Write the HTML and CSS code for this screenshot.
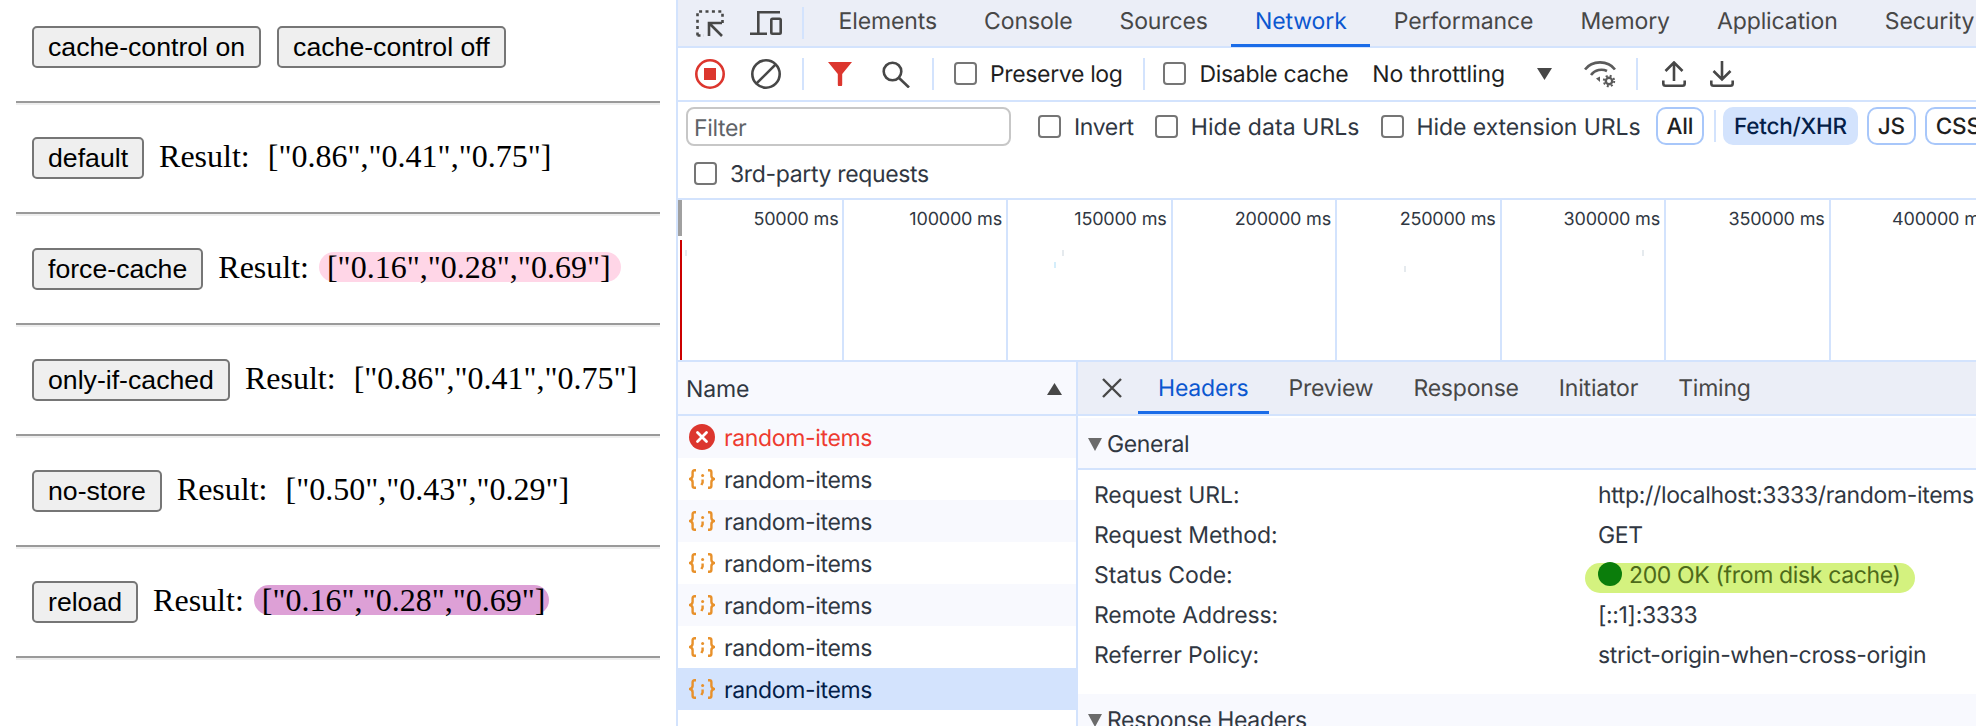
FILE: index.html
```html
<!DOCTYPE html>
<html lang="en">
<head>
<meta charset="utf-8">
<title>Fetch cache modes</title>
<link rel="stylesheet" href="styles.css">
</head>
<body>
<svg class="defs" width="0" height="0" aria-hidden="true">
  <symbol id="json" viewBox="0 0 26 20">
    <path d="M7 1.2H5.6C4.2 1.2 3.6 2 3.6 3.2V6.8C3.6 8.4 2.8 9.4 1 10C2.8 10.6 3.6 11.6 3.6 13.2V16.8C3.6 18 4.2 18.8 5.6 18.8H7" fill="none" stroke="currentColor" stroke-width="2.4"/>
    <path d="M19 1.2H20.4C21.8 1.2 22.4 2 22.4 3.2V6.8C22.4 8.4 23.2 9.4 25 10C23.2 10.6 22.4 11.6 22.4 13.2V16.8C22.4 18 21.8 18.8 20.4 18.8H19" fill="none" stroke="currentColor" stroke-width="2.4"/>
    <circle cx="13.6" cy="6.5" r="1.5" fill="currentColor"/>
    <path d="M13.6 10.5V13.5L12.4 16" fill="none" stroke="currentColor" stroke-width="2.4"/>
  </symbol>
</svg>
<div class="app">
  <main class="page">
    <section class="row row-first">
      <button class="btn">cache-control on</button>
      <button class="btn">cache-control off</button>
    </section>
    <hr class="rule">
    <section class="row">
      <button class="btn">default</button>
      <span class="result">Result:</span>
      <span class="value">["0.86","0.41","0.75"]</span>
    </section>
    <hr class="rule">
    <section class="row">
      <button class="btn">force-cache</button>
      <span class="result">Result:</span>
      <span class="value value-pink">["0.16","0.28","0.69"]</span>
    </section>
    <hr class="rule">
    <section class="row">
      <button class="btn">only-if-cached</button>
      <span class="result">Result:</span>
      <span class="value">["0.86","0.41","0.75"]</span>
    </section>
    <hr class="rule">
    <section class="row">
      <button class="btn">no-store</button>
      <span class="result">Result:</span>
      <span class="value">["0.50","0.43","0.29"]</span>
    </section>
    <hr class="rule">
    <section class="row">
      <button class="btn">reload</button>
      <span class="result">Result:</span>
      <span class="value value-purple">["0.16","0.28","0.69"]</span>
    </section>
    <hr class="rule">
  </main>

  <div class="devtools">
    <nav class="tabbar">
      <span class="slot">
        <svg width="28" height="27" viewBox="0 0 28 27" fill="none" stroke="#474747" stroke-width="2.6">
          <path d="M1.5 25.5V1.5H26.5V14M1.5 25.5H8" stroke-dasharray="3 3.4"/>
          <path d="M13 26V13H26M13 13L26 26"/>
        </svg>
      </span>
      <span class="slot">
        <svg width="32" height="24" viewBox="0 0 32 24" fill="none" stroke="#474747" stroke-width="2.6">
          <path d="M30 1.3H8.3V22.7M0 22.7H17"/>
          <rect x="21.3" y="7.8" width="9.4" height="14.9" rx="1.2"/>
        </svg>
      </span>
      <span class="sep sep-tabs"></span>
      <span class="tab">Elements</span>
      <span class="tab">Console</span>
      <span class="tab">Sources</span>
      <span class="tab tab-on">Network</span>
      <span class="tab">Performance</span>
      <span class="tab">Memory</span>
      <span class="tab">Application</span>
      <span class="tab">Security</span>
    </nav>

    <div class="toolbar">
      <span class="slot">
        <svg width="30" height="30" viewBox="0 0 30 30" fill="none">
          <circle cx="15" cy="15" r="13.7" stroke="#dc362e" stroke-width="2.6"/>
          <rect x="9" y="9" width="12" height="12" fill="#dc362e"/>
        </svg>
      </span>
      <span class="slot">
        <svg width="30" height="30" viewBox="0 0 30 30" fill="none" stroke="#474747" stroke-width="2.6">
          <circle cx="15" cy="15" r="13.7"/>
          <path d="M24.7 5.3L5.3 24.7"/>
        </svg>
      </span>
      <span class="sep"></span>
      <span class="slot">
        <svg width="24" height="24" viewBox="0 0 24 24">
          <path d="M0 0H24L14.2 12V22.5A1.5 1.5 0 0 1 9.8 22.5V12Z" fill="#dc362e"/>
        </svg>
      </span>
      <span class="slot">
        <svg width="28" height="27" viewBox="0 0 28 27" fill="none" stroke="#474747" stroke-width="2.6">
          <circle cx="10.5" cy="10.5" r="8.8"/>
          <path d="M16.8 16.8L27 26.5"/>
        </svg>
      </span>
      <span class="sep"></span>
      <label class="check check-tool"><input type="checkbox"><span>Preserve log</span></label>
      <span class="sep"></span>
      <label class="check check-tool check-cache"><input type="checkbox"><span>Disable cache</span></label>
      <span class="throttle">No throttling<svg width="15" height="12" viewBox="0 0 15 12"><path d="M0 0H15L7.5 12Z" fill="#474747"/></svg></span>
      <span class="slot">
        <svg width="32" height="27" viewBox="0 0 32 27" fill="none" stroke="#5b5b5b">
          <path d="M1 8.5C8 -1 24 -1 31 8.5" stroke-width="2.6"/>
          <path d="M7 14C11 8.5 18 7.5 23 10" stroke-width="2.6"/>
          <path d="M12 17.5L16 15.5V21Z" fill="#5b5b5b" stroke="none"/>
          <circle cx="25" cy="20" r="3.2" stroke-width="2.4"/>
          <circle cx="25" cy="20" r="5.2" stroke-width="2" stroke-dasharray="2 2.1"/>
        </svg>
      </span>
      <span class="sep"></span>
      <span class="slot">
        <svg width="24" height="26" viewBox="0 0 24 26" fill="none" stroke="#474747" stroke-width="2.6">
          <path d="M12 20V2M3.5 10L12 1.5L20.5 10"/>
          <path d="M1.3 19.5V22.5C1.3 24 2 24.7 3.5 24.7H20.5C22 24.7 22.7 24 22.7 22.5V19.5"/>
        </svg>
      </span>
      <span class="slot slot-near">
        <svg width="24" height="26" viewBox="0 0 24 26" fill="none" stroke="#474747" stroke-width="2.6">
          <path d="M12 0V18M3.5 10L12 18.5L20.5 10"/>
          <path d="M1.3 19.5V22.5C1.3 24 2 24.7 3.5 24.7H20.5C22 24.7 22.7 24 22.7 22.5V19.5"/>
        </svg>
      </span>
    </div>

    <div class="filters">
      <div class="filter-line">
        <span class="filter-input">Filter</span>
        <label class="check check-invert"><input type="checkbox"><span>Invert</span></label>
        <label class="check check-data"><input type="checkbox"><span>Hide data URLs</span></label>
        <label class="check check-ext"><input type="checkbox"><span>Hide extension URLs</span></label>
        <span class="pill">All</span>
        <span class="sep sep-pill"></span>
        <span class="pill pill-on">Fetch/XHR</span>
        <span class="pill">JS</span>
        <span class="pill">CSS</span>
      </div>
      <div class="filter-line filter-line-second">
        <label class="check"><input type="checkbox"><span>3rd-party requests</span></label>
      </div>
    </div>

    <div class="overview">
      <div class="cell cell-first">50000 ms</div>
      <div class="cell">100000 ms</div>
      <div class="cell">150000 ms</div>
      <div class="cell">200000 ms</div>
      <div class="cell">250000 ms</div>
      <div class="cell">300000 ms</div>
      <div class="cell">350000 ms</div>
      <div class="cell">400000 ms</div>
      <i class="mark mark-gray"></i>
      <i class="mark mark-red"></i>
      <i class="mark mark-a"></i>
      <i class="mark mark-b"></i>
      <i class="mark mark-c"></i>
      <i class="mark mark-d"></i>
      <i class="mark mark-e"></i>
    </div>

    <div class="split">
      <div class="list">
        <div class="list-head"><span>Name</span><svg width="15" height="12" viewBox="0 0 15 12"><path d="M0 12H15L7.5 0Z" fill="#474747"/></svg></div>
        <div class="req req-alt req-error">
          <svg class="req-icon" width="26" height="26" viewBox="0 0 26 26"><circle cx="13" cy="13" r="13" fill="#dc362e"/><path d="M8.5 8.5L17.5 17.5M17.5 8.5L8.5 17.5" stroke="#fff" stroke-width="2.8" stroke-linecap="round"/></svg>
          <span>random-items</span>
        </div>
        <div class="req"><svg class="req-icon json"><use href="#json"/></svg><span>random-items</span></div>
        <div class="req req-alt"><svg class="req-icon json"><use href="#json"/></svg><span>random-items</span></div>
        <div class="req"><svg class="req-icon json"><use href="#json"/></svg><span>random-items</span></div>
        <div class="req req-alt"><svg class="req-icon json"><use href="#json"/></svg><span>random-items</span></div>
        <div class="req"><svg class="req-icon json"><use href="#json"/></svg><span>random-items</span></div>
        <div class="req req-on"><svg class="req-icon json"><use href="#json"/></svg><span>random-items</span></div>
      </div>

      <div class="detail">
        <nav class="detail-tabs">
          <span class="close">
            <svg width="20" height="20" viewBox="0 0 20 20" stroke="#474747" stroke-width="2.4"><path d="M1 1L19 19M19 1L1 19"/></svg>
          </span>
          <span class="dtab dtab-on">Headers</span>
          <span class="dtab">Preview</span>
          <span class="dtab">Response</span>
          <span class="dtab">Initiator</span>
          <span class="dtab">Timing</span>
        </nav>
        <div class="section-head section-general"><svg width="14" height="13" viewBox="0 0 14 13"><path d="M0 0H14L7 13Z" fill="#6b6b6b"/></svg><span>General</span></div>
        <div class="kv">
          <span class="k">Request URL:</span><span class="v">http://localhost:3333/random-items</span>
          <span class="k">Request Method:</span><span class="v">GET</span>
          <span class="k">Status Code:</span><span class="v"><span class="status"><i class="dot"></i><span>200 OK (from disk cache)</span></span></span>
          <span class="k">Remote Address:</span><span class="v">[::1]:3333</span>
          <span class="k">Referrer Policy:</span><span class="v">strict-origin-when-cross-origin</span>
        </div>
        <div class="section-head"><svg width="14" height="13" viewBox="0 0 14 13"><path d="M0 0H14L7 13Z" fill="#6b6b6b"/></svg><span>Response Headers</span></div>
      </div>
    </div>
  </div>
</div>
</body>
</html>
```

FILE: styles.css
```css
* { box-sizing: border-box; }
html, body { margin: 0; height: 100%; background: #fff; overflow: hidden; }
.defs { position: absolute; }

.app { display: flex; width: 1976px; height: 726px; overflow: hidden; }

/* left test page */
.page { width: 676px; flex: none; padding: 0 16px; }
.row {
  display: flex;
  align-items: baseline;
  gap: 15px;
  padding: 32px 16px 33px;
  font-family: "Liberation Serif", serif;
  font-size: 32px;
  color: #000;
}
.row-first { padding-top: 26px; gap: 16px; }
.btn {
  flex: none;
  height: 42px;
  padding: 0 14px;
  font-family: "Liberation Sans", Arial, sans-serif;
  font-size: 26.67px;
  white-space: nowrap;
  color: #000;
  background: #efefef;
  border: 2px solid #767676;
  border-radius: 5px;
}
.result { line-height: 30px; margin-right: -5px; }
.value { display: inline-block; line-height: 30px; padding: 0 8px; border-radius: 15px; }
.value-pink { padding: 0 10px 0 8px; background: #ffd6e7; }
.value-purple { padding: 0 4px 0 8px; background: #dda0d6; }
.rule {
  height: 4px;
  margin: 0;
  border: 0;
  border-top: 2px solid #9a9a9a;
  border-bottom: 2px solid #eeeeee;
}

/* devtools */
.devtools {
  flex: 1;
  min-width: 0;
  display: flex;
  flex-direction: column;
  overflow: hidden;
  border-left: 2px solid #d3e3fd;
  font-family: Inter, "Liberation Sans", sans-serif;
  font-size: 23px;
  letter-spacing: -0.35px;
  color: #1f1f1f;
  white-space: nowrap;
  text-rendering: geometricPrecision;
}
.slot { flex: none; width: 56px; height: 100%; display: flex; align-items: center; justify-content: center; }
.slot-near { margin-left: -8px; }
.sep { flex: none; width: 2px; height: 32px; margin: 0 8px; background: #d3e3fd; }

.tabbar {
  flex: none;
  display: flex;
  align-items: center;
  height: 48px;
  padding-left: 4px;
  background: #ebeef7;
  border-bottom: 2px solid #d3e3fd;
}
.sep-tabs { margin: 0 11px 0 8px; }
.tab {
  display: flex;
  align-items: center;
  height: 48px;
  padding: 0 23.5px 2px;
  letter-spacing: -0.1px;
  color: #474747;
  border-bottom: 3px solid transparent;
}
.tab-on { color: #0b57d0; border-bottom-color: #1a6ce8; }

.toolbar {
  flex: none;
  display: flex;
  align-items: center;
  height: 54px;
  padding-left: 4px;
  border-bottom: 2px solid #d3e3fd;
}
.check { flex: none; display: flex; align-items: center; gap: 13px; padding-top: 1px; color: #303742; }
.check input {
  appearance: none;
  flex: none;
  width: 23px;
  height: 23px;
  margin: -1px 0 0;
  background: #fff;
  border: 2px solid #757575;
  border-radius: 4px;
}
.check-tool { padding: 0 12px; color: #1f1f1f; }
.check-cache { margin-left: -2px; gap: 14px; }
.throttle {
  flex: none;
  width: 200px;
  margin-left: 12px;
  padding-right: 20px;
  display: flex;
  align-items: center;
  justify-content: space-between;
  letter-spacing: -0.1px;
}

.filters { flex: none; height: 98px; border-bottom: 2px solid #d3e3fd; }
.filter-line { display: flex; align-items: center; gap: 21px; height: 48px; padding-left: 8px; }
.filter-line-second { padding-left: 16px; height: 47px; }
.filter-input {
  flex: none;
  width: 325px;
  height: 39px;
  padding-left: 6px;
  line-height: 39px;
  color: #5f6368;
  border: 2px solid #c7c7c7;
  border-radius: 8px;
}
.check-invert { margin-left: 6px; }
.check-data span { letter-spacing: 0.08px; }
.check-ext { margin-right: -6px; }
.check-ext span { letter-spacing: -0.08px; }
.pill {
  flex: none;
  height: 38px;
  margin-right: -12px;
  padding: 0 9px;
  line-height: 35px;
  font-size: 22.5px;
  font-weight: 500;
  letter-spacing: -0.25px;
  color: #1f1f1f;
  border: 2px solid #a8c7fa;
  border-radius: 10px;
}
.pill-on { color: #041e49; background: #d3e3fd; border-color: #d3e3fd; }
.sep-pill { margin: 0 -14px 0 1px; }

.overview {
  flex: none;
  position: relative;
  display: flex;
  height: 162px;
  border-bottom: 2px solid #d3e3fd;
  font-size: 18px;
  letter-spacing: -0.2px;
  color: #303742;
}
.cell {
  flex: none;
  width: 164.5px;
  padding: 9px 4px 0 0;
  text-align: right;
  border-right: 2px solid #d3e3fd;
}
.cell-first { width: 165.5px; padding-right: 3px; }
.mark { position: absolute; display: block; }
.mark-gray { left: 0; top: 0; width: 4px; height: 36px; background: #a0a0a0; }
.mark-red { left: 2px; top: 40px; width: 2px; height: 120px; background: #cc0000; }
.mark-a { left: 7px; top: 50px; width: 2px; height: 6px; background: #e5eaee; }
.mark-b { left: 384px; top: 50px; width: 2px; height: 6px; background: #e5eaee; }
.mark-c { left: 376px; top: 62px; width: 2px; height: 6px; background: #d5eefb; }
.mark-d { left: 726px; top: 66px; width: 2px; height: 6px; background: #e5eaee; }
.mark-e { left: 964px; top: 50px; width: 2px; height: 6px; background: #e5eaee; }

.split { flex: 1; min-height: 0; display: flex; }
.list { flex: none; width: 400px; border-right: 2px solid #d3e3fd; }
.list-head {
  display: flex;
  align-items: center;
  justify-content: space-between;
  height: 54px;
  padding: 2px 14px 0 8px;
  letter-spacing: -0.1px;
  color: #303742;
  background: #f8f9fe;
  border-bottom: 2px solid #d3e3fd;
}
.req {
  display: flex;
  align-items: center;
  gap: 9px;
  height: 42px;
  padding-left: 11px;
  color: #303742;
  background: #fff;
}
.req > span { padding-top: 2px; }
.req-alt { background: #f8f9fe; }
.req-error { color: #ee3b30; }
.req-on { color: #041e49; background: #d3e3fd; }
.req-icon { flex: none; width: 26px; height: 26px; }
.json { color: #e8912b; }

.detail { flex: 1; min-width: 0; }
.detail-tabs {
  display: flex;
  align-items: stretch;
  height: 54px;
  color: #474747;
  letter-spacing: -0.2px;
  background: #ebeef7;
  border-bottom: 2px solid #d3e3fd;
}
.close { flex: none; width: 60px; display: flex; align-items: center; justify-content: center; padding-left: 8px; }
.dtab {
  display: flex;
  align-items: center;
  padding: 2px 20px 0;
  border-bottom: 3px solid transparent;
}
.dtab-on { color: #0b57d0; border-bottom-color: #1a6ce8; }
.section-head {
  display: flex;
  align-items: center;
  gap: 5px;
  height: 52px;
  padding: 2px 0 0 10px;
  color: #303742;
  background: #f8f9fe;
  border-bottom: 2px solid #d3e3fd;
}
.section-general { margin-top: 2px; }
.kv {
  display: grid;
  grid-template-columns: 504px 1fr;
  grid-auto-rows: 40px;
  align-items: center;
  padding: 5px 0 19px 16px;
  color: #303742;
}
.k { letter-spacing: -0.1px; }
.status {
  display: inline-flex;
  align-items: flex-start;
  gap: 7px;
  height: 30px;
  margin: 8px 0 0 -13px;
  padding: 0 14px 0 13px;
  line-height: 24px;
  color: #4d6a1a;
  background: #d4f27f;
  border-radius: 15px;
  vertical-align: top;
}
.v { height: 40px; line-height: 40px; }
.dot { flex: none; width: 24px; height: 24px; margin-top: -1px; border-radius: 50%; background: #0b7d0b; }
```
